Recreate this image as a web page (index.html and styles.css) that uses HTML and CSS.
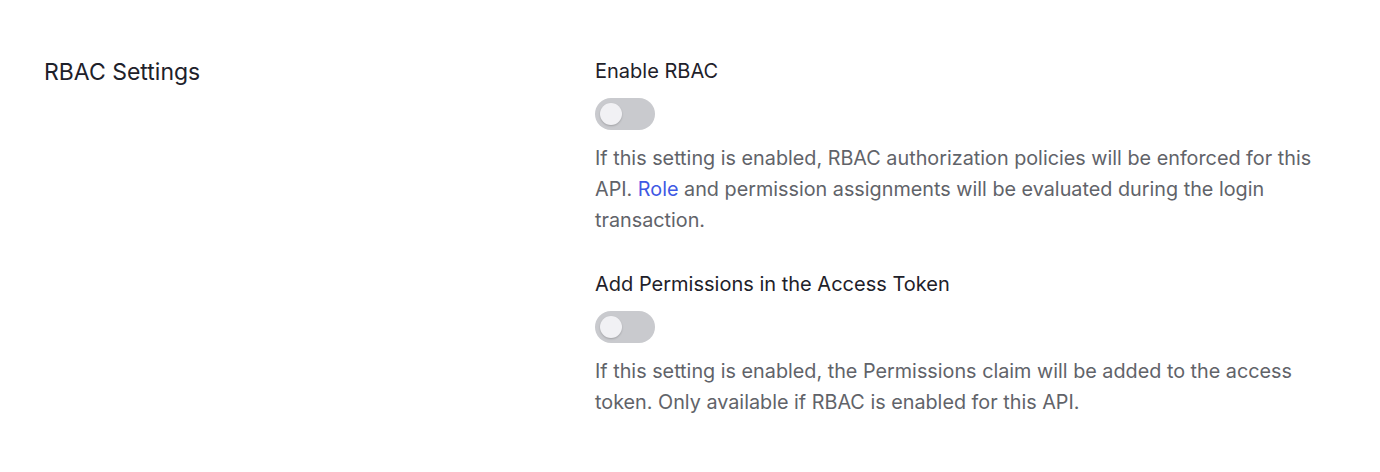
FILE: index.html
```html
<!DOCTYPE html>
<html>
<head>
    <title>RBAC Settings</title>
    <link rel="stylesheet" href="styles.css">
</head>
<body>
    <div class="section">
        <h2 class="section-title">RBAC Settings</h2>
        <div class="fields">
            <div class="field">
                <label class="field-label">Enable RBAC</label>
                <span class="switch"><span class="knob"></span></span>
                <p class="help">If this setting is enabled, RBAC authorization policies will be enforced for this API. <a href="#">Role</a> and permission assignments will be evaluated during the login transaction.</p>
            </div>
            <div class="field">
                <label class="field-label">Add Permissions in the Access Token</label>
                <span class="switch"><span class="knob"></span></span>
                <p class="help">If this setting is enabled, the Permissions claim will be added to the access token. Only available if RBAC is enabled for this API.</p>
            </div>
        </div>
    </div>
</body>
</html>
```

FILE: styles.css
```css
body {
    margin: 0;
    background-color: #ffffff;
    font-family: Inter, "Noto Sans", sans-serif;
    color: #1e212a;
}

.section {
    display: grid;
    grid-template-columns: 551px 1fr;
    padding: 57px 40px 0 44px;
}

.section-title {
    margin: 0;
    font-size: 23px;
    font-weight: 400;
    line-height: 30px;
}

.fields {
    display: flex;
    flex-direction: column;
    gap: 34px;
}

.field {
    display: flex;
    flex-direction: column;
    align-items: flex-start;
}

.field-label {
    font-size: 20px;
    line-height: 28px;
    color: #1e212a;
}

.switch {
    position: relative;
    display: block;
    width: 60px;
    height: 32px;
    margin-top: 13px;
    border-radius: 16px;
    background-color: #c9cace;
}

.knob {
    position: absolute;
    top: 5px;
    left: 5px;
    width: 22px;
    height: 22px;
    border-radius: 50%;
    background-color: #f1f1f4;
    box-shadow: 0 1px 2px rgba(0, 0, 0, 0.2);
}

.help {
    margin: 13px 0 0;
    max-width: 745px;
    font-size: 19.8px;
    line-height: 31px;
    color: #616369;
}

.help a {
    color: #3f59e4;
    text-decoration: none;
}
```
